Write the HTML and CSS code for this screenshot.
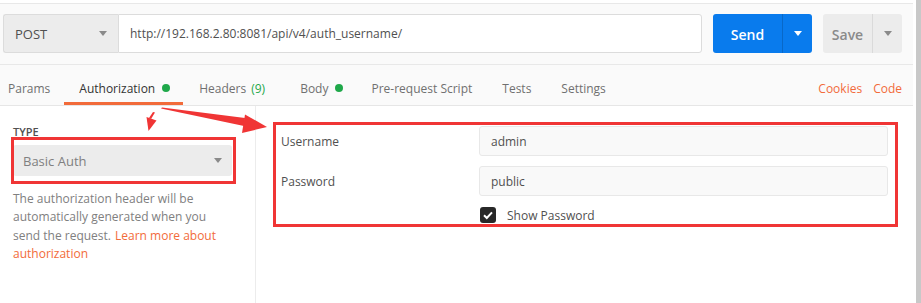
FILE: index.html
```html
<!DOCTYPE html>
<html lang="en">
<head>
    <meta charset="UTF-8">
    <title>Authorization</title>
    <link rel="stylesheet" href="styles.css">
</head>
<body>
    <div class="app">
        <div class="main">
            <div class="request-bar">
                <div class="method">POST <span class="caret"></span></div>
                <div class="url">http://192.168.2.80:8081/api/v4/auth_username/</div>
                <div class="send">
                    <span class="send-label">Send</span>
                    <span class="send-drop"><span class="caret caret-white"></span></span>
                </div>
                <div class="save">
                    <span class="save-label">Save</span>
                    <span class="save-drop"><span class="caret"></span></span>
                </div>
            </div>

            <div class="tabs">
                <div class="tab first">Params</div>
                <div class="tab active">Authorization <span class="dot"></span></div>
                <div class="tab headers">Headers <span class="count">(9)</span></div>
                <div class="tab body-tab">Body <span class="dot"></span></div>
                <div class="tab">Pre-request Script</div>
                <div class="tab">Tests</div>
                <div class="tab">Settings</div>
                <div class="tab-links">
                    <span>Cookies</span>
                    <span>Code</span>
                </div>
            </div>

            <div class="panes">
                <div class="auth-type">
                    <div class="type-label">TYPE</div>
                    <div class="type-select">Basic Auth <span class="caret"></span></div>
                    <p class="type-help">The authorization header will be automatically generated when you send the request.<span class="link">Learn more about authorization</span></p>
                </div>
                <div class="auth-fields">
                    <div class="field-label">Username</div>
                    <div class="field-input">admin</div>
                    <div class="field-label">Password</div>
                    <div class="field-input">public</div>
                    <div></div>
                    <label class="show-pass">
                        <span class="check">
                            <svg width="12" height="12" viewBox="0 0 12 12"><path d="M2 6.2 L4.8 9 L10 3.4" fill="none" stroke="#fff" stroke-width="2"/></svg>
                        </span>
                        Show Password
                    </label>
                </div>
            </div>
        </div>
        <div class="scrollbar"></div>

        <div class="mark mark-type"></div>
        <div class="mark mark-fields"></div>
        <svg class="arrows" width="921" height="303" viewBox="0 0 921 303">
            <polygon points="153,112 155,112.5 151,119 149,118" fill="#f03535"/>
            <polygon points="156.5,120.5 146.5,117 148.5,131" fill="#f03535"/>
            <polygon points="161,108.5 162,107.5 245,118 244,126" fill="#f03535"/>
            <polygon points="245,114.5 242,133 267,127" fill="#f03535"/>
        </svg>
    </div>
</body>
</html>
```

FILE: styles.css
```css
body {
    margin: 0;
    font-family: 'Open Sans', sans-serif;
    font-size: 12px;
    color: #505050;
    background-color: #ffffff;
}

.app {
    position: relative;
    display: flex;
    width: 921px;
    height: 303px;
    overflow: hidden;
}

.main {
    width: 913px;
    display: flex;
    flex-direction: column;
}

.scrollbar {
    width: 5px;
    margin-left: 3px;
    background-color: #c8c8c8;
}

.request-bar {
    display: flex;
    gap: 11px;
    margin-top: 3px;
    padding: 10px 11px 11px 3px;
    height: 39px;
    background-color: #fafafa;
    border-top: 1px solid #e8e8e8;
    border-bottom: 1px solid #e8e8e8;
}

.method {
    width: 115px;
    box-sizing: border-box;
    display: flex;
    align-items: center;
    justify-content: space-between;
    padding: 0 11px 0 11px;
    background-color: #ececec;
    border: 1px solid #dcdcdc;
    border-right: none;
    border-radius: 3px 0 0 3px;
    font-size: 13px;
    color: #505050;
    margin-right: -11px;
}

.url {
    flex: 1;
    display: flex;
    align-items: center;
    padding: 0 11px;
    background-color: #ffffff;
    border: 1px solid #dcdcdc;
    border-radius: 0 3px 3px 0;
    font-size: 12px;
    color: #505050;
}

.caret {
    display: inline-block;
    width: 0;
    height: 0;
    border-left: 4px solid transparent;
    border-right: 4px solid transparent;
    border-top: 5px solid #8a8a8a;
}

.caret-white {
    border-top-color: #ffffff;
}

.send,
.save {
    display: flex;
    border-radius: 3px;
    font-size: 14px;
    font-weight: 600;
}

.send {
    background-color: #097bed;
    color: #ffffff;
}

.save {
    background-color: #ececec;
    color: #8a8a8a;
}

.send-label {
    width: 69px;
    display: flex;
    align-items: center;
    justify-content: center;
    padding-top: 1px;
    border-right: 1px solid #0868c8;
}

.save-label {
    width: 49px;
    display: flex;
    align-items: center;
    justify-content: center;
    padding-top: 1px;
    border-right: 1px solid #dadada;
}

.send-drop,
.save-drop {
    width: 29px;
    display: flex;
    align-items: center;
    justify-content: center;
}

.tabs {
    display: flex;
    height: 41px;
    box-sizing: border-box;
    background-color: #fafafa;
    border-bottom: 1px solid #e6e6e6;
    padding-right: 11px;
}

.tab {
    display: flex;
    align-items: center;
    gap: 7px;
    padding: 9px 15px 0 15px;
    border-bottom: 3px solid transparent;
    color: #707070;
}

.tab.first {
    padding-left: 8px;
    padding-right: 14px;
}

.tab.active {
    color: #333333;
    border-bottom-color: #f26b3a;
    padding-right: 13px;
}

.tab.headers {
    gap: 5px;
    padding-left: 16px;
    padding-right: 20px;
}

.tab.body-tab {
    padding-right: 13px;
}

.dot {
    width: 8px;
    height: 8px;
    border-radius: 50%;
    background-color: #1fa84a;
}

.count {
    color: #1fa84a;
}

.tab-links {
    margin-left: auto;
    display: flex;
    align-items: center;
    gap: 11px;
    padding-top: 6px;
    color: #f26b3a;
}

.panes {
    flex: 1;
    display: flex;
}

.auth-type {
    width: 256px;
    box-sizing: border-box;
    padding: 19px 23px 0 13px;
    border-right: 1px solid #ececec;
}

.type-label {
    font-size: 11px;
    font-weight: 600;
    color: #505050;
    line-height: 14px;
}

.type-select {
    margin-top: 6px;
    height: 31px;
    display: flex;
    align-items: center;
    justify-content: space-between;
    padding: 0 10px;
    background-color: #ececec;
    border-radius: 3px;
    font-size: 13px;
    color: #808080;
}

.type-help {
    margin: 14px 0 0;
    line-height: 18.3px;
    color: #808080;
}

.link {
    margin-left: 4px;
    color: #f26b3a;
}

.auth-fields {
    flex: 1;
    display: grid;
    grid-template-columns: 198px 1fr;
    grid-auto-rows: 30px;
    row-gap: 10px;
    align-content: start;
    padding: 20px 25px 0 25px;
}

.field-label {
    display: flex;
    align-items: center;
    color: #505050;
}

.field-input {
    display: flex;
    align-items: center;
    padding: 0 11px;
    background-color: #f9f9f9;
    border: 1px solid #e8e8e8;
    border-radius: 3px;
    color: #505050;
}

.show-pass {
    height: 16px;
    margin-top: 1px;
    display: flex;
    align-items: center;
    gap: 11px;
    padding-left: 1px;
    color: #505050;
}

.check {
    width: 16px;
    height: 16px;
    border-radius: 3px;
    background-color: #282828;
    display: flex;
    align-items: center;
    justify-content: center;
}

/* screenshot annotations */
.mark {
    position: absolute;
    border: 3px solid #f03535;
    box-sizing: border-box;
}

.mark-type {
    left: 11px;
    top: 137px;
    width: 225px;
    height: 47px;
}

.mark-fields {
    left: 273px;
    top: 122px;
    width: 625px;
    height: 105px;
}

.arrows {
    position: absolute;
    left: 0;
    top: 0;
    pointer-events: none;
}
```
